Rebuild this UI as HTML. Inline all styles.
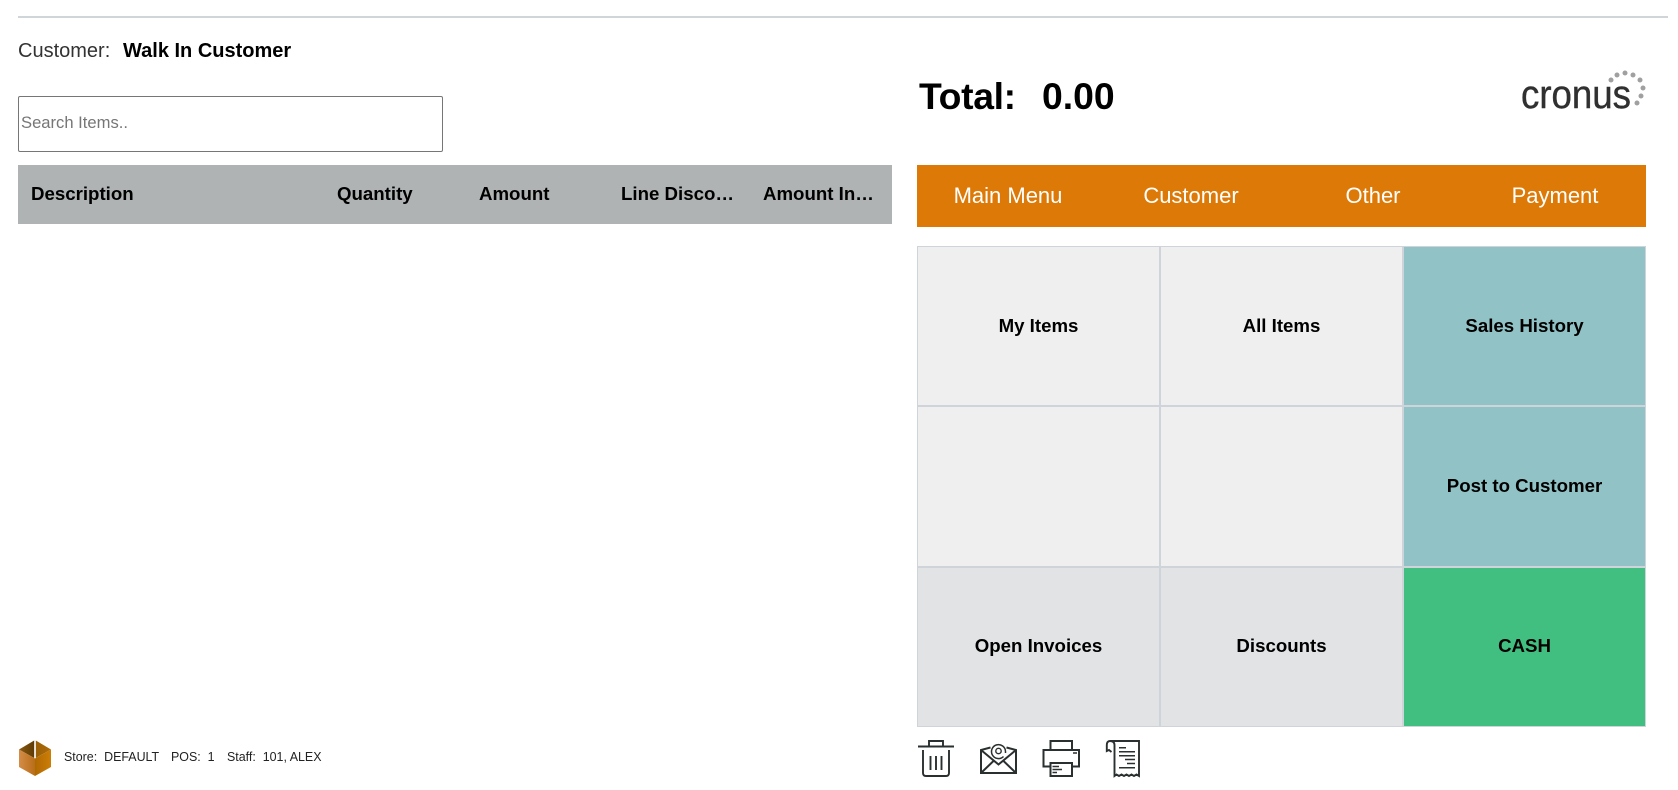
<!DOCTYPE html>
<html><head><meta charset="utf-8"><style>
html,body{margin:0;padding:0;background:#fff;width:1678px;height:790px;overflow:hidden;font-family:"Liberation Sans",sans-serif;color:#000}
.a{position:absolute;white-space:nowrap}
.h{top:165px;height:59px;line-height:58px;font-size:18.67px;font-weight:700}
.n{top:165px;height:62px;line-height:62px;width:182px;text-align:center;color:#fff;font-size:22px}
.c{box-sizing:border-box;border:1px solid #cfd4db;width:243px;display:flex;align-items:center;justify-content:center;font-size:18.67px;font-weight:700;position:absolute}
.r1{top:246px;height:160px;padding-bottom:1px}.r2{top:406px;height:161px;padding-bottom:2px}.r3{top:567px;height:160px;padding-bottom:2px}
svg{position:absolute;overflow:visible}
</style></head><body>
<div class="a" style="left:18px;top:16px;width:1650px;height:2px;background:#d0d5da"></div>
<div class="a" style="left:18px;top:39px;font-size:20px;line-height:24px;color:#333">Customer:</div>
<div class="a" style="left:123px;top:39px;font-size:20px;line-height:24px;font-weight:700">Walk In Customer</div>
<div class="a" style="left:18px;top:96px;width:425px;height:56px;box-sizing:border-box;border:1px solid #767676;border-radius:2px;font-size:16.6px;line-height:52px;padding-left:2px;color:#767676">Search Items..</div>
<div class="a" style="left:18px;top:165px;width:874px;height:59px;background:#afb3b4"></div>
<div class="a h" style="left:31px">Description</div>
<div class="a h" style="left:337px">Quantity</div>
<div class="a h" style="left:479px">Amount</div>
<div class="a h" style="left:621px">Line Disco…</div>
<div class="a h" style="left:763px">Amount In…</div>
<div class="a" style="left:919px;top:72px;font-size:37.33px;line-height:48px;font-weight:700;letter-spacing:-.35px">Total:</div>
<div class="a" style="left:1042px;top:72px;font-size:37.33px;line-height:48px;font-weight:700">0.00</div>
<svg style="left:1500px;top:60px" width="160" height="60" viewBox="0 0 160 60">
<text x="21" y="48" font-family="Liberation Sans" font-size="40" fill="#303030" stroke="#303030" stroke-width=".4" textLength="110" lengthAdjust="spacingAndGlyphs">cronus</text>
<g fill="#a0a0a0"><circle cx="111" cy="20" r="2.5"/><circle cx="117" cy="15" r="2.5"/><circle cx="125" cy="13" r="2.5"/><circle cx="133" cy="15" r="2.5"/><circle cx="140" cy="20" r="2.5"/><circle cx="143" cy="28" r="2.5"/><circle cx="141" cy="36" r="2.5"/><circle cx="137" cy="43" r="2.5"/></g></svg>
<div class="a" style="left:917px;top:165px;width:729px;height:62px;background:#dd7907"></div>
<div class="a n" style="left:917px">Main Menu</div>
<div class="a n" style="left:1100px">Customer</div>
<div class="a n" style="left:1282px">Other</div>
<div class="a n" style="left:1464px">Payment</div>
<div class="c r1" style="left:917px;background:#efefef">My Items</div>
<div class="c r1" style="left:1160px;background:#efefef">All Items</div>
<div class="c r1" style="left:1403px;background:#90c2c6">Sales History</div>
<div class="c r2" style="left:917px;background:#efefef"></div>
<div class="c r2" style="left:1160px;background:#efefef"></div>
<div class="c r2" style="left:1403px;background:#90c2c6">Post to Customer</div>
<div class="c r3" style="left:917px;background:#e2e3e5">Open Invoices</div>
<div class="c r3" style="left:1160px;background:#e2e3e5">Discounts</div>
<div class="c r3" style="left:1403px;background:#41bf80">CASH</div>
<!-- footer box -->
<svg style="left:18px;top:740px" width="34" height="37" viewBox="0 0 34 37">
<defs><linearGradient id="g1" x1="0" x2="1" y1="0" y2="0"><stop offset="0" stop-color="#d48c48"/><stop offset="1" stop-color="#b86e18"/></linearGradient>
<linearGradient id="g2" x1="0" x2="1" y1="0" y2="0"><stop offset="0" stop-color="#b06802"/><stop offset="1" stop-color="#cc7f06"/></linearGradient>
<linearGradient id="g3" x1="0" x2="1" y1="0" y2="0"><stop offset="0" stop-color="#8a5a10"/><stop offset="1" stop-color="#5e3a04"/></linearGradient>
<linearGradient id="g4" x1="0" x2="1" y1="0" y2="0"><stop offset="0" stop-color="#9a5f05"/><stop offset="1" stop-color="#b06c0a"/></linearGradient></defs>
<path d="M16.2 0.5L1 9.5L16.2 18Z" fill="url(#g3)"/><path d="M17.8 0.5L33 9.5L17.8 18Z" fill="url(#g4)"/>
<path d="M1 9.5L17 18.5V36L1 27Z" fill="url(#g1)"/><path d="M33 9.5L17 18.5V36L33 27Z" fill="url(#g2)"/></svg>
<div class="a" style="left:64px;top:749px;font-size:12.44px;line-height:16px;color:#222;white-space:pre">Store:  DEFAULT</div>
<div class="a" style="left:171px;top:749px;font-size:12.44px;line-height:16px;color:#222;white-space:pre">POS:  1</div>
<div class="a" style="left:227px;top:749px;font-size:12.44px;line-height:16px;color:#222;white-space:pre">Staff:  101, ALEX</div>
<!-- trash -->
<svg style="left:918px;top:740px" width="36" height="37" viewBox="0 0 36 37" fill="none" stroke="#2a2f2f" stroke-width="1.9">
<path d="M0 6.5H36M11 6V1H25V6M5 10V33Q5 36 8 36H28Q31 36 31 33V10"/><path d="M12.5 16V30M18 16V30M23.5 16V30"/></svg>
<!-- mail -->
<svg style="left:980px;top:743px" width="37" height="31" viewBox="0 0 37 31" fill="none" stroke="#2a2f2f" stroke-width="2">
<path d="M10.5 4.5L1 7V30H36V7L26.5 4.5M1 7L18.5 21.5L36 7M1 30L14 17.5M36 30L23 17.5"/>
<path d="M23.5 13.5A7 7 0 1 1 25.5 8.5V10" stroke-width="1.5"/><circle cx="18.5" cy="8" r="2.7" stroke-width="1.4"/></svg>
<!-- printer -->
<svg style="left:1042px;top:740px" width="38" height="37" viewBox="0 0 38 37" fill="none" stroke="#2a2f2f" stroke-width="2">
<path d="M8.5 10V1H30V10M8 26.5H1.5V10H37V26.5H30"/><path d="M8.5 23H30V36H8.5Z"/><path d="M31 13H35M10.5 26.5H17M10.5 29.5H20M10.5 32.5H15" stroke-width="1.4"/></svg>
<!-- receipt -->
<svg style="left:1106px;top:740px" width="34" height="37" viewBox="0 0 34 37" fill="none" stroke="#2a2f2f" stroke-width="1.9">
<path d="M4 1H33V36L30.5 34.5L28 36L25.5 34.5L23 36L20.5 34.5L18 36L15.5 34.5L13 36L10.5 34.5L8.5 36V5Q8.5 1 4 1Q0.8 1 0.8 5V11L3 10L5.5 12"/>
<path d="M13 7.7H20M13 11.7H29M13 15.7H29M19 19.5H29M21 23.5H29M13 27.7H29" stroke-width="1.5"/></svg>
</body></html>
